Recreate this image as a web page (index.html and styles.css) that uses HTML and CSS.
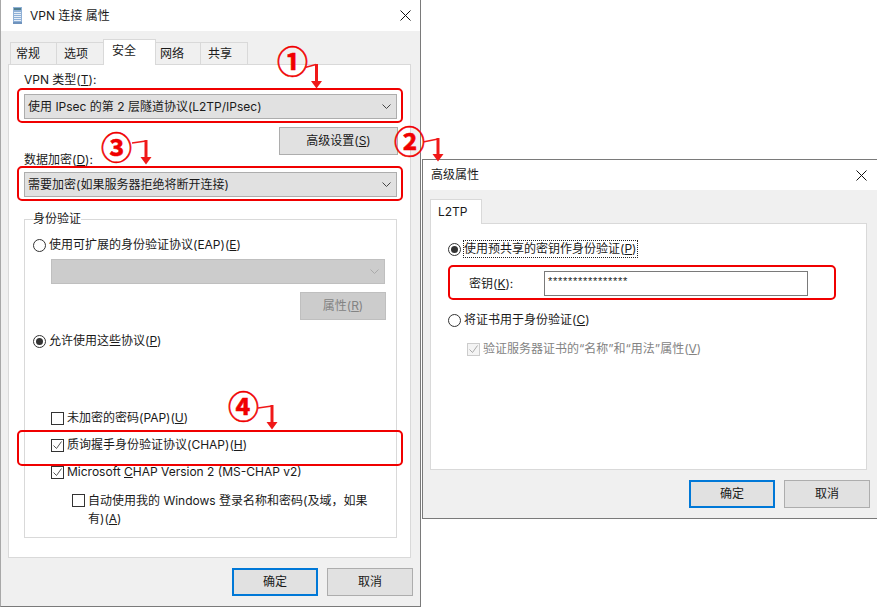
FILE: index.html
```html
<!DOCTYPE html>
<html lang="zh-CN">
<head>
<meta charset="utf-8">
<title>VPN 连接 属性</title>
<link rel="stylesheet" href="styles.css">
</head>
<body>
<section class="window main">
  <header class="titlebar">
    <svg class="appicon" width="9" height="17" viewBox="0 0 9 17"><rect width="9" height="17" fill="#8fb0d6"/><rect x="1" y="1" width="7" height="2" fill="#4f7f8f"/><path d="M1 5.5h7M1 7.5h7M1 9.5h7M1 11.5h7M1 13.5h7" stroke="#e6eef7" fill="none"/><rect x="0" y="15" width="9" height="2" fill="#6f93bd"/></svg>
    <span class="title">VPN 连接 属性</span>
    <svg class="close" width="11" height="11" viewBox="0 0 11 11"><path d="M0.5 0.5l10 10M10.5 0.5l-10 10" stroke="#111" fill="none"/></svg>
  </header>
  <nav class="tabs">
    <span class="tab p6">常规</span><span class="tab p7">选项</span><span class="tab active">安全</span><span class="tab p5">网络</span><span class="tab p7">共享</span>
  </nav>
  <div class="panel mainpanel">
    <div class="label first">VPN 类型(<u>T</u>):</div>
    <div class="select wide"><span>使用 IPsec 的第 2 层隧道协议(L2TP/IPsec)</span><svg class="chev" width="9" height="5" viewBox="0 0 9 5"><path d="M0.5 0.5l4 4 4-4" stroke="#444" fill="none"/></svg></div>
    <div class="btn adv">高级设置(<u>S</u>)</div>
    <div class="label second">数据加密(<u>D</u>):</div>
    <div class="select wide"><span>需要加密(如果服务器拒绝将断开连接)</span><svg class="chev" width="9" height="5" viewBox="0 0 9 5"><path d="M0.5 0.5l4 4 4-4" stroke="#444" fill="none"/></svg></div>
    <fieldset class="group">
      <legend>身份验证</legend>
      <div class="row r-eap"><i class="radio"></i><span>使用可扩展的身份验证协议(EAP)(<u>E</u>)</span></div>
      <div class="select off"><svg class="chev" width="9" height="5" viewBox="0 0 9 5"><path d="M0.5 0.5l4 4 4-4" stroke="#aaa" fill="none"/></svg></div>
      <div class="btn disabled prop">属性(<u>R</u>)</div>
      <div class="row r-allow"><i class="radio on"></i><span>允许使用这些协议(<u>P</u>)</span></div>
      <div class="row indent r-pap"><i class="check"></i><span>未加密的密码(PAP)(<u>U</u>)</span></div>
      <div class="row indent r-chap"><i class="check"><svg width="11" height="11" viewBox="0 0 11 11"><path d="M1.5 5.5l3 3 5-7" stroke="#555" fill="none"/></svg></i><span>质询握手身份验证协议(CHAP)(<u>H</u>)</span></div>
      <div class="row indent r-chap"><i class="check"><svg width="11" height="11" viewBox="0 0 11 11"><path d="M1.5 5.5l3 3 5-7" stroke="#555" fill="none"/></svg></i><span>Microsoft <u>C</u>HAP Version 2 (MS-CHAP v2)</span></div>
      <div class="row auto"><i class="check"></i><span class="autotext">自动使用我的 Windows 登录名称和密码(及域，如果有)(<u>A</u>)</span></div>
    </fieldset>
  </div>
  <footer class="footer">
    <div class="btn primary">确定</div>
    <div class="btn">取消</div>
  </footer>
</section>

<section class="window dialog">
  <header class="titlebar">
    <span class="title plain">高级属性</span>
    <svg class="close" width="11" height="11" viewBox="0 0 11 11"><path d="M0.5 0.5l10 10M10.5 0.5l-10 10" stroke="#111" fill="none"/></svg>
  </header>
  <nav class="tabs dtabs"><span class="tab active l2tp">L2TP</span></nav>
  <div class="panel dpanel">
    <div class="row d-psk"><i class="radio on"></i><span class="focus">使用预共享的密钥作身份验证(<u>P</u>)</span></div>
    <div class="keyrow"><span class="keylabel">密钥(<u>K</u>):</span><span class="input">****************</span></div>
    <div class="row d-cert"><i class="radio"></i><span>将证书用于身份验证(<u>C</u>)</span></div>
    <div class="row d-verify grey"><i class="check dim"><svg width="11" height="11" viewBox="0 0 11 11"><path d="M1.5 5.5l3 3 5-7" stroke="#aaa" fill="none"/></svg></i><span>验证服务器证书的“名称”和“用法”属性(<u>V</u>)</span></div>
  </div>
  <footer class="footer dfooter">
    <div class="btn primary">确定</div>
    <div class="btn">取消</div>
  </footer>
</section>

<div class="mark box1"></div>
<div class="mark box2"></div>
<div class="mark box3"></div>
<div class="mark box4"></div>
<span class="num n1">①</span>
<span class="num n2">②</span>
<span class="num n3">③</span>
<span class="num n4">④</span>
<svg class="arrows" width="877" height="607" viewBox="0 0 877 607">
  <g fill="none" stroke="#f01818" stroke-width="1.5"><path d="M305 67.5L316 64.5"/><path d="M423 142L438 139"/><path d="M132 143L146 141"/><path d="M258 408L272 406"/></g>
  <g fill="none" stroke="#f01818" stroke-width="3"><path d="M316.5 64V82"/><path d="M438 138V155"/><path d="M146 140V158"/><path d="M272 405V423"/></g>
  <g fill="#f01818"><path d="M311 81h11l-5.5 7.5z"/><path d="M432.500 154h11l-5.500 7.500z"/><path d="M140.500 157h11l-5.500 7.500z"/><path d="M266.500 422h11l-5.500 7.500z"/></g>
</svg>
</body>
</html>
```
FILE: styles.css
```css
* { box-sizing: border-box; }
html, body { margin: 0; padding: 0; background: #fff; }
body {
  position: relative;
  width: 877px;
  height: 607px;
  overflow: hidden;
  font: 12px/16px Inter, "Noto Sans CJK SC", sans-serif;
  color: #1a1a1a;
}
.window {
  position: absolute;
  display: flex;
  flex-direction: column;
  background: #f0f0f0;
  border: 0 solid #7a7a7a;
}
.main { left: 0; top: 0; width: 421px; height: 607px; border-width: 0 1px 1px 1px; border-left-color: #a8a8a8; }
.dialog { left: 422px; top: 159px; width: 455px; height: 360px; border-width: 1px 0 1px 1px; }

.titlebar { flex: none; display: flex; align-items: center; height: 31px; background: #fff; }
.dialog .titlebar { height: 30px; }
.appicon { margin-left: 12px; margin-right: 8px; }
.title { flex: 1; font-size: 12px; }
.title.plain { margin-left: 8px; }
.close { margin-right: 9px; }
.dialog .close { margin-right: 10px; }

.tabs { display: flex; align-items: flex-end; flex: none; height: 33px; padding-left: 9px; }
.tab {
  width: 47px;
  height: 23px;
  margin-bottom: -1px;
  border: 1px solid #d9d9d9;
  border-bottom: 0;
  border-left-width: 0;
  background: #f0f0f0;
  line-height: 21px;
}
.tab:first-child { border-left-width: 1px; }
.p5 { width: 46px; padding-left: 5px; }
.p6 { padding-left: 5px; }
.p7 { padding-left: 7px; }
.tab.active {
  position: relative;
  z-index: 1;
  width: 53px;
  height: 26px;
  margin-left: -1px;
  margin-right: -1px;
  padding-left: 8px;
  border-left-width: 1px;
  background: #fff;
  line-height: 22px;
}
.dtabs { height: 33px; padding-left: 7px; }
.tab.l2tp { height: 25px; margin-left: 0; width: 52px; padding-left: 7px; line-height: 24px; }

.panel { background: #fff; border: 1px solid #d9d9d9; flex: none; }
.mainpanel { width: 403px; height: 494px; margin-left: 7px; padding: 0 0 0 15px; }
.dpanel { width: 437px; height: 247px; margin-left: 7px; padding-left: 17px; }

.label.first { margin-top: 7px; height: 16px; margin-bottom: 6px; }
.label.second { margin-top: -3px; height: 16px; margin-bottom: 4px; }
.select {
  display: flex;
  align-items: center;
  justify-content: space-between;
  height: 25px;
  padding: 0 5px 0 3px;
  background: #e1e1e1;
  border: 1px solid #adadad;
}
.select.wide { width: 373px; }
.select.off { width: 334px; height: 25px; margin: 6px 0 0 18px; justify-content: flex-end; background: #ccc; border-color: #bfbfbf; }
.btn {
  display: flex;
  align-items: center;
  justify-content: center;
  width: 86px;
  height: 28px;
  background: #e1e1e1;
  border: 1px solid #adadad;
}
.btn.primary { border: 2px solid #0078d7; }
.btn.adv { width: 119px; margin: 8px 0 0 255px; }
.btn.disabled { background: #ccc; border-color: #bfbfbf; color: #838383; }
.btn.prop { margin: 8px 0 0 267px; }

.group {
  width: 373px;
  height: 327px;
  margin: 14px 0 0 0;
  padding: 0 0 0 8px;
  border: 1px solid #d9d9d9;
  min-width: 0;
}
.group legend { padding: 0; margin-left: 0; height: 16px; line-height: 16px; }

.row { display: flex; align-items: center; height: 16px; }
.row > span { margin-left: 3px; }
.r-eap { margin-top: 10px; }
.r-allow { margin-top: 13px; }
.indent { margin-left: 18px; }
.r-pap { margin-top: 61px; }
.r-chap { margin-top: 11px; }
.auto { margin: 12px 0 0 39px; height: auto; width: 300px; align-items: flex-start; }
.auto .check { margin-top: 2px; }
.autotext { line-height: 18px; width: 285px; }

.radio, .check {
  position: relative;
  display: block;
  flex: none;
  width: 13px;
  height: 13px;
  background: #fff;
  border: 1px solid #333;
}
.radio { border-radius: 50%; }
.radio.on::after {
  content: "";
  position: absolute;
  left: 2px; top: 2px;
  width: 7px; height: 7px;
  border-radius: 50%;
  background: #333;
}
.check svg { position: absolute; left: 0; top: 0; }
.check.dim { border-color: #ccc; background: #f4f4f4; }
.grey { color: #838383; }

.footer { flex: none; display: flex; justify-content: flex-end; gap: 9px; padding: 10px 7px 0 0; }
.dfooter { padding: 10px 7px 0 0; }

.d-psk { margin-top: 17px; }
.focus { outline: 1px dotted #222; outline-offset: 0; margin-left: 3px; padding-right: 1px; }
.keyrow { display: flex; align-items: center; height: 25px; margin: 14px 0 0 21px; }
.keylabel { width: 75px; }
.input {
  display: block;
  width: 264px;
  height: 25px;
  padding: 0 3px;
  font-family: "Liberation Sans", sans-serif;
  font-size: 11px;
  line-height: 18px;
  letter-spacing: 0.72px;
  background: #fff;
  border: 1px solid #7a7a7a;
}
.d-cert { margin-top: 16px; }
.d-verify { margin: 13px 0 0 19px; }

.mark { position: absolute; border: 2px solid #f00000; border-radius: 5px; }
.box1 { left: 17px; top: 88px; width: 386px; height: 35px; }
.box2 { left: 448px; top: 265px; width: 388px; height: 35px; }
.box3 { left: 17px; top: 166px; width: 386px; height: 35px; }
.box4 { left: 17px; top: 430px; width: 386px; height: 36px; }

.num {
  position: absolute;
  width: 30px;
  height: 30px;
  font: bold 31px/30px "Noto Sans CJK SC", sans-serif;
  -webkit-text-stroke: 0.5px #f00000;
  text-align: center;
  color: #f00000;
}
.n1 { left: 277px; top: 45px; }
.n2 { left: 394px; top: 125px; }
.n3 { left: 101px; top: 131px; }
.n4 { left: 228px; top: 390px; }
.arrows { position: absolute; left: 0; top: 0; pointer-events: none; }
```
